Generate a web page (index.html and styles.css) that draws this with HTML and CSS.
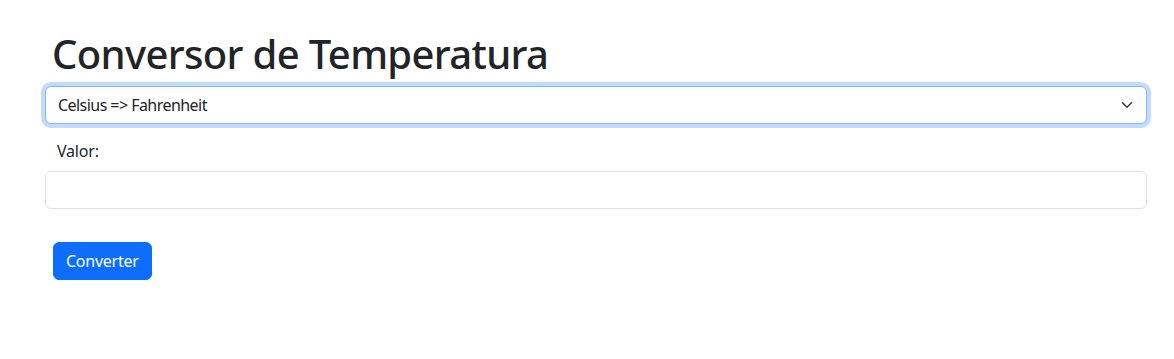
FILE: index.html
```html
<!DOCTYPE html>
<html lang="pt">
<head>
<meta charset="utf-8">
<title>Conversor de Temperatura</title>
<link rel="stylesheet" href="styles.css">
</head>
<body>
<main class="page">
  <h1 class="title">Conversor de Temperatura</h1>
  <div class="select-wrap">
    <select class="form-select">
      <option>Celsius =&gt; Fahrenheit</option>
      <option>Fahrenheit =&gt; Celsius</option>
    </select>
    <svg class="chevron" viewBox="0 0 16 16" width="16" height="12" preserveAspectRatio="xMidYMid meet" aria-hidden="true">
      <path d="m2 5 6 6 6-6" fill="none" stroke="#343a40" stroke-width="2" stroke-linecap="round" stroke-linejoin="round"/>
    </svg>
  </div>
  <div class="field">
    <label class="label" for="valor">Valor:</label>
    <input id="valor" class="form-control" type="text">
  </div>
  <div class="actions">
    <button class="btn" type="button">Converter</button>
  </div>
</main>
</body>
</html>
```

FILE: styles.css
```css
* { box-sizing: border-box; }
html, body { margin: 0; padding: 0; background: #fff; }
body {
  font-family: "Noto Sans", "Open Sans", sans-serif;
  font-size: 16px;
  line-height: 1.5;
  color: #212529;
}
.page {
  padding: 30px 27px 0 45px;
  display: flex;
  flex-direction: column;
}
.title {
  margin: 0 0 8px 7px;
  font-size: 40px;
  font-weight: 500;
  line-height: 48px;
  letter-spacing: -0.65px;
}
.select-wrap {
  position: relative;
}
.form-select {
  display: block;
  width: 100%;
  height: 38px;
  padding: 6px 36px 6px 12px;
  font: inherit;
  letter-spacing: -0.55px;
  color: #212529;
  background: #fff;
  border: 1px solid #86b7fe;
  border-radius: 6px;
  box-shadow: 0 0 0 4px rgba(13, 110, 253, 0.25);
  appearance: none;
  -webkit-appearance: none;
  outline: none;
}
.chevron {
  position: absolute;
  right: 12px;
  top: 13px;
  pointer-events: none;
}
.field {
  display: flex;
  flex-direction: column;
  margin-top: 15px;
}
.label {
  margin: 0 0 8px 12px;
  line-height: 24px;
  letter-spacing: -0.2px;
}
.form-control {
  display: block;
  width: 100%;
  height: 38px;
  padding: 6px 12px;
  font: inherit;
  border: 1px solid #dee2e6;
  border-radius: 6px;
  background: #fff;
  outline: none;
}
.actions {
  margin-top: 33px;
  padding-left: 8px;
  display: flex;
}
.btn {
  height: 38px;
  padding: 6px 12px;
  font: inherit;
  line-height: 24px;
  letter-spacing: -0.25px;
  color: #fff;
  background: #0d6efd;
  border: 1px solid #0d6efd;
  border-radius: 6px;
  cursor: pointer;
}
```
